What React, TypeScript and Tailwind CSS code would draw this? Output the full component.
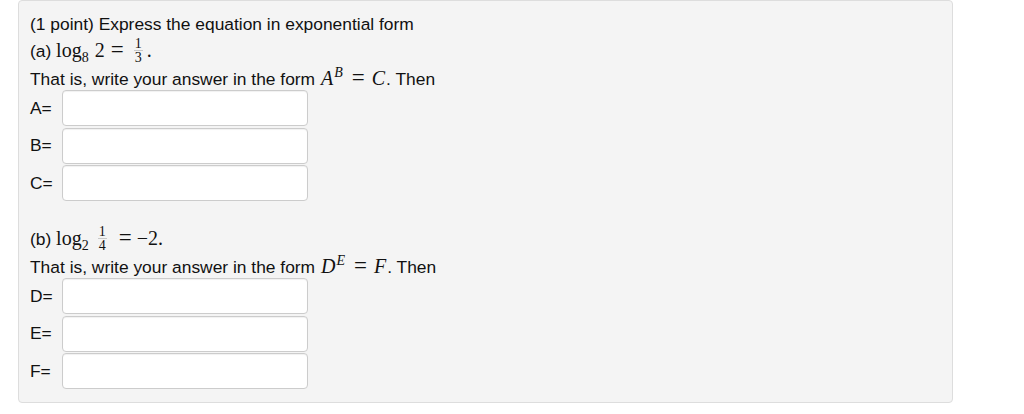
const sans = { fontFamily: '"Liberation Sans", Arial, sans-serif' };

function Frac({ n, d }: { n: string; d: string }) {
  return (
    <span className="inline-flex flex-col items-center align-middle mx-[4px] text-[14px] leading-[11px] font-['Liberation_Serif',serif] relative top-[-2px]">
      <span className="px-[1px] pb-[1px]">{n}</span>
      <span className="px-[1px] border-t border-[#c8c8c8] w-full text-center pt-[1px]">{d}</span>
    </span>
  );
}

function M({ children, italic, cls = "" }: { children: React.ReactNode; italic?: boolean; cls?: string }) {
  return (
    <span className={`font-['Liberation_Serif',serif] text-[20px] ${italic ? "italic" : ""} ${cls}`}>
      {children}
    </span>
  );
}

function Eq({ cls = "mx-[6px]" }: { cls?: string }) {
  return <span className={`font-['Liberation_Serif',serif] text-[23px] leading-none ${cls}`}>=</span>;
}

function Sub({ children }: { children: React.ReactNode }) {
  return (
    <span className="font-['Liberation_Serif',serif] text-[14px] relative top-[5px]">{children}</span>
  );
}

function Sup({ children }: { children: React.ReactNode }) {
  return (
    <span className="font-['Liberation_Serif',serif] italic text-[14px] relative top-[-8px] ml-[1px]">
      {children}
    </span>
  );
}

function Field({ label }: { label: string }) {
  return (
    <div className="flex items-center">
      <span className="w-[32px] text-[17.4px]">{label}</span>
      <div className="w-[246px] h-[36px] bg-white border border-[#cccccc] rounded-[4px] shadow-[inset_0_1px_1px_rgba(0,0,0,0.06)]" />
    </div>
  );
}

export default function App() {
  return (
    <div className="bg-white w-[1024px] h-[414px] pl-[18px]" style={sans}>
      <div className="w-[935px] h-[403px] bg-[#f4f4f4] border border-[#dddddd] rounded-[4px] pl-[11px] pt-[11px] text-[#111] text-[17.4px]">
        <div className="leading-[25px]">(1 point) Express the equation in exponential form</div>
        <div className="leading-[27px]">
          (a) <M>log</M>
          <Sub>8</Sub>
          <M cls="ml-[6px]">2</M>
          <Eq />
          <Frac n="1" d="3" />
          <M>.</M>
        </div>
        <div className="leading-[25px]">
          That is, write your answer in the form <M italic cls="ml-[1px]">A</M>
          <Sup>B</Sup>
          <Eq cls="ml-[9px] mr-[7px]" />
          <M italic>C</M>
          <span className="ml-[1px]">. Then</span>
        </div>
        <div className="flex flex-col gap-[1.5px] mt-[-3px]">
          <Field label="A=" />
          <Field label="B=" />
          <Field label="C=" />
        </div>
        <div className="leading-[27px] mt-[24px]">
          (b) <M>log</M>
          <Sub>2</Sub>
          <span className="ml-[5px]" />
          <Frac n="1" d="4" />
          <Eq cls="ml-[8px] mr-[5px]" />
          <M>−2.</M>
        </div>
        <div className="leading-[25px]">
          That is, write your answer in the form <M italic cls="ml-[1px]">D</M>
          <Sup>E</Sup>
          <Eq cls="ml-[9px] mr-[7px]" />
          <M italic>F</M>
          <span className="ml-[1px]">. Then</span>
        </div>
        <div className="flex flex-col gap-[1.5px] mt-[-3px]">
          <Field label="D=" />
          <Field label="E=" />
          <Field label="F=" />
        </div>
      </div>
    </div>
  );
}
